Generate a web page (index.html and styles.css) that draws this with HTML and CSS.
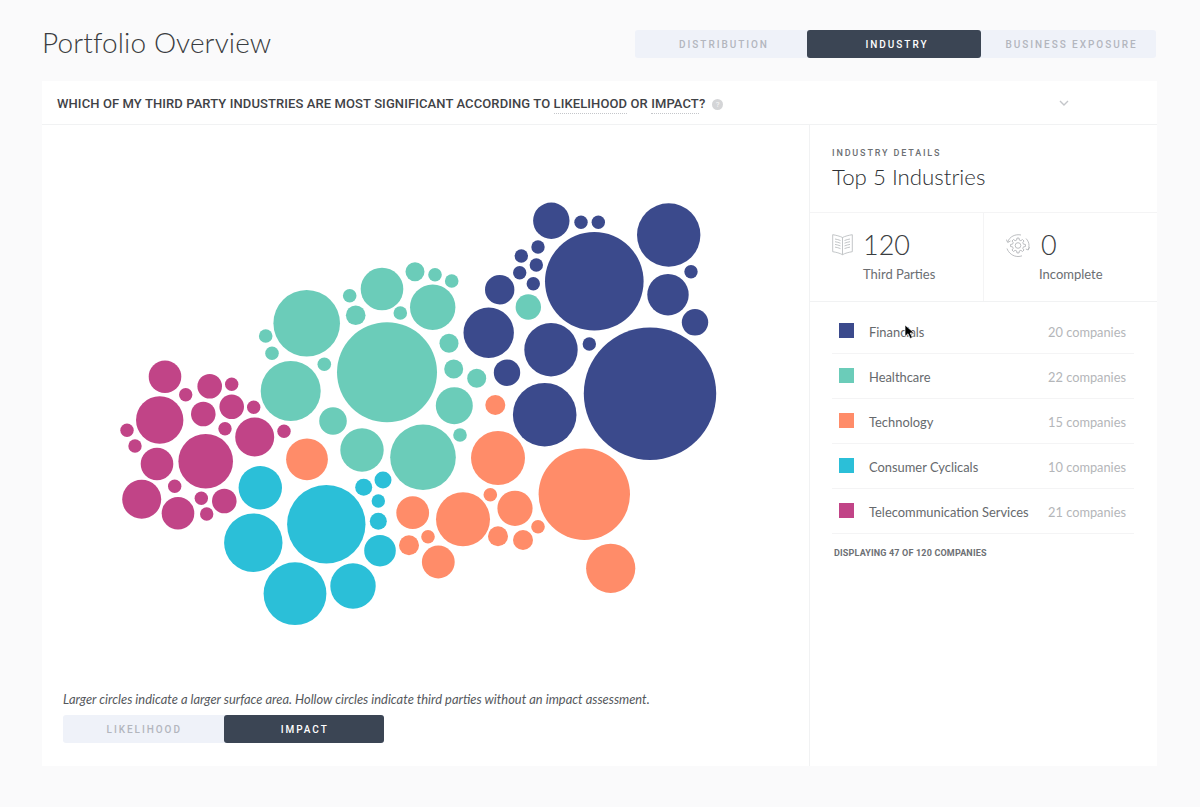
FILE: index.html
```html
<!DOCTYPE html>
<html lang="en">
<head>
<meta charset="utf-8">
<title>Portfolio Overview</title>
<link rel="stylesheet" href="styles.css">
</head>
<body>
<div class="page">
  <header class="top">
    <h1 class="title">Portfolio Overview</h1>
    <div class="tabs">
      <button class="seg seg-a">DISTRIBUTION</button>
      <button class="seg seg-b on">INDUSTRY</button>
      <button class="seg seg-c">BUSINESS EXPOSURE</button>
    </div>
  </header>
  <main class="card">
    <div class="question">
      <div class="q-text">WHICH OF MY THIRD PARTY INDUSTRIES ARE MOST SIGNIFICANT ACCORDING TO <span class="dot">LIKELIHOOD</span> OR <span class="dot">IMPACT</span>?<span class="help">?</span></div>
      <svg class="chev" width="10" height="6" viewBox="0 0 10 6"><path d="M1 1l4 4 4-4" fill="none" stroke="#c4c6ca" stroke-width="1.4"/></svg>
    </div>
    <div class="body">
      <section class="left">
        <svg class="chart" viewBox="42 125 767 557" width="767" height="557">
          <g fill="#3b4a8c">
            <circle cx="551.3" cy="220.7" r="18.2"/><circle cx="581" cy="222.3" r="6.7"/><circle cx="598.3" cy="222.3" r="6.7"/><circle cx="668.7" cy="235" r="31.7"/><circle cx="538" cy="247" r="6.7"/><circle cx="521.3" cy="256" r="6.7"/><circle cx="536.3" cy="265" r="6.7"/><circle cx="519.7" cy="272.7" r="6.7"/><circle cx="533.3" cy="283.7" r="6.7"/><circle cx="594.3" cy="281.3" r="49.3"/><circle cx="691" cy="271.7" r="6.7"/><circle cx="668" cy="294.7" r="20.7"/><circle cx="499.7" cy="289.7" r="14.7"/><circle cx="695" cy="322.3" r="13.2"/><circle cx="488.7" cy="332.7" r="25.2"/><circle cx="551" cy="349.7" r="26.7"/><circle cx="589.3" cy="344" r="6.7"/><circle cx="507" cy="372.7" r="13.2"/><circle cx="544.7" cy="414.7" r="31.8"/><circle cx="650" cy="393.7" r="66.2"/>
          </g>
          <g fill="#6bccb9">
            <circle cx="306.7" cy="323.3" r="33.3"/><circle cx="382" cy="289" r="21.3"/><circle cx="415" cy="271.7" r="9.5"/><circle cx="435" cy="274.7" r="6.8"/><circle cx="451.7" cy="281" r="6.8"/><circle cx="349.7" cy="295.7" r="6.8"/><circle cx="355.7" cy="315.3" r="9.8"/><circle cx="400.3" cy="313" r="6.8"/><circle cx="432.7" cy="307.3" r="22.7"/><circle cx="265.7" cy="336" r="6.8"/><circle cx="272" cy="353.3" r="6.8"/><circle cx="324.3" cy="364.3" r="6.8"/><circle cx="387" cy="372.3" r="50"/><circle cx="449" cy="343.3" r="9.5"/><circle cx="453.7" cy="369" r="9.5"/><circle cx="476.7" cy="378.3" r="9.5"/><circle cx="290.7" cy="391" r="30"/><circle cx="333" cy="421" r="13.8"/><circle cx="454.3" cy="405.7" r="18.5"/><circle cx="460" cy="435" r="6.8"/><circle cx="362" cy="450" r="21.7"/><circle cx="423" cy="457.3" r="32.8"/><circle cx="528.3" cy="307" r="12.7"/>
          </g>
          <g fill="#ff8c69">
            <circle cx="307" cy="459.3" r="20.9"/><circle cx="495.3" cy="405" r="10"/><circle cx="498" cy="458" r="27"/><circle cx="584.3" cy="494.3" r="45.7"/><circle cx="490.3" cy="494.7" r="6.8"/><circle cx="515" cy="508.3" r="17.6"/><circle cx="538" cy="526.7" r="6.8"/><circle cx="463" cy="519.3" r="27"/><circle cx="412.7" cy="512.7" r="16.4"/><circle cx="428" cy="536.7" r="6.8"/><circle cx="409" cy="545.3" r="10"/><circle cx="438.3" cy="562" r="16.4"/><circle cx="498" cy="536.3" r="10"/><circle cx="523" cy="540" r="10"/><circle cx="610.7" cy="568.3" r="24.6"/>
          </g>
          <g fill="#2bbfd8">
            <circle cx="260.3" cy="487.7" r="21.7"/><circle cx="326.3" cy="524.3" r="39.2"/><circle cx="253.3" cy="542.7" r="29.2"/><circle cx="295" cy="593.7" r="31.4"/><circle cx="353" cy="586" r="22.7"/><circle cx="380" cy="550.7" r="15.8"/><circle cx="378.3" cy="521.3" r="8.5"/><circle cx="378.3" cy="501" r="6.7"/><circle cx="363.7" cy="487.3" r="8.5"/><circle cx="383" cy="480" r="8.5"/>
          </g>
          <g fill="#c14487">
            <circle cx="165" cy="376.7" r="16.3"/><circle cx="185.7" cy="394.7" r="6.7"/><circle cx="209.7" cy="386.3" r="12.3"/><circle cx="231.7" cy="384.3" r="6.7"/><circle cx="159.7" cy="420" r="23.7"/><circle cx="203.3" cy="414" r="12.3"/><circle cx="231.7" cy="406.7" r="12.3"/><circle cx="253.7" cy="407.3" r="6.7"/><circle cx="127" cy="430.3" r="6.7"/><circle cx="135" cy="446" r="6.7"/><circle cx="225" cy="428.7" r="6.7"/><circle cx="254.7" cy="437" r="19.5"/><circle cx="284" cy="431.3" r="6.7"/><circle cx="157" cy="464" r="16.3"/><circle cx="205.7" cy="461.3" r="27.3"/><circle cx="141.7" cy="499.3" r="19.5"/><circle cx="174.7" cy="486.3" r="6.7"/><circle cx="178" cy="513.3" r="16.3"/><circle cx="201.3" cy="498.3" r="6.7"/><circle cx="224.3" cy="501" r="12.3"/><circle cx="206.7" cy="514" r="6.7"/>
          </g>
        </svg>
        <p class="note">Larger circles indicate a larger surface area. Hollow circles indicate third parties without an impact assessment.</p>
        <div class="toggle">
          <button class="seg seg-d">LIKELIHOOD</button>
          <button class="seg seg-d on">IMPACT</button>
        </div>
      </section>
      <aside class="right">
        <div class="r-head">
          <div class="eyebrow">INDUSTRY DETAILS</div>
          <h2 class="r-title">Top 5 Industries</h2>
        </div>
        <div class="stats">
          <div class="stat stat-one">
            <div class="stat-top">
              <svg class="ico" width="21" height="22" viewBox="0 0 21 22" fill="none" stroke="#b4b7ba" stroke-width=".8">
                <path d="M10.500 3.500C8 2.200 4 1.200.7.700v17c3.300.5 7.300 1.500 9.800 3 2.500-1.500 6.500-2.500 9.800-3V.7c-3.300.5-7.300 1.500-9.800 2.800zM10.500 3.500v17.200"/>
                <path d="M3 5c1.800.3 3.700.8 5.500 1.500M3 7.700c1.800.3 3.700.8 5.500 1.500M3 10.400c1.800.3 3.700.8 5.500 1.500M3 13.100c1.800.3 3.700.8 5.500 1.500M18 5c-1.800.3-3.700.8-5.500 1.500M18 7.700c-1.800.3-3.700.8-5.500 1.500M18 10.400c-1.800.3-3.700.8-5.500 1.500M18 13.100c-1.800.3-3.700.8-5.500 1.500"/>
              </svg>
              <span class="num">120</span>
            </div>
            <div class="stat-label">Third Parties</div>
          </div>
          <div class="stat stat-two">
            <div class="stat-top">
              <svg class="ico" width="24" height="23" viewBox="0 0 24 23" fill="none" stroke="#b4b7ba" stroke-width=".9">
                <path d="M15 1C9.500-.2 3.500 2.500 1.700 8M1 14.500C2.500 19 7 22.500 12 22.500c1.500 0 2.800-.2 4-.7"/>
                <path d="M20 4.500C22 6.500 23 9 23 11.500c0 1.500-.3 2.800-.8 4"/>
                <path d="M.3 5.500l1.400 3 2.800-1.500M19.800 15l2.400 1 1.500-2.800"/>
                <polygon transform="translate(12 11.500)" points="5.430,-1.350 7.430,-1.040 7.430,1.040 5.430,1.350 4.800,2.880 5.990,4.510 4.510,5.990 2.880,4.800 1.350,5.430 1.040,7.430 -1.040,7.430 -1.350,5.430 -2.880,4.800 -4.510,5.990 -5.990,4.510 -4.800,2.880 -5.430,1.350 -7.430,1.040 -7.430,-1.040 -5.430,-1.350 -4.800,-2.880 -5.990,-4.510 -4.510,-5.990 -2.880,-4.800 -1.350,-5.430 -1.040,-7.430 1.040,-7.430 1.350,-5.430 2.880,-4.800 4.510,-5.990 5.990,-4.510 4.800,-2.880"/>
                <circle cx="12" cy="11.500" r="2.800"/>
              </svg>
              <span class="num">0</span>
            </div>
            <div class="stat-label">Incomplete</div>
          </div>
        </div>
        <ul class="list">
          <li class="row">
            <span class="sw sw-navy"></span><span class="name">Financials</span><span class="count">20 companies</span>
            <svg class="cursor" width="12" height="16" viewBox="0 0 12 16"><path d="M1 1v11.500l3-2.700 2.200 4.700 2.200-1-2.200-4.500h4z" fill="#000" stroke="#fff" stroke-width=".7"/></svg>
          </li>
          <li class="row"><span class="sw sw-teal"></span><span class="name">Healthcare</span><span class="count">22 companies</span></li>
          <li class="row"><span class="sw sw-orange"></span><span class="name">Technology</span><span class="count">15 companies</span></li>
          <li class="row"><span class="sw sw-cyan"></span><span class="name">Consumer Cyclicals</span><span class="count">10 companies</span></li>
          <li class="row"><span class="sw sw-pink"></span><span class="name">Telecommunication Services</span><span class="count">21 companies</span></li>
        </ul>
        <div class="foot">DISPLAYING 47 OF 120 COMPANIES</div>
      </aside>
    </div>
  </main>
</div>
</body>
</html>
```
FILE: styles.css
```css
* { box-sizing: border-box; }
html, body { margin: 0; padding: 0; }
body {
  background: #fafafb;
  font-family: "Lato", "Liberation Sans", sans-serif;
  color: #3d3d3d;
}
.page { width: 1200px; height: 807px; padding: 30px 43px 0 42px; overflow: hidden; }
.top { display: flex; justify-content: space-between; align-items: flex-start; height: 28px; margin-bottom: 23px; padding-right: 1px; }
.title { margin: -2px 0 0; font-size: 28px; font-weight: 300; letter-spacing: .12px; line-height: 28px; color: #3a3d41; }
.tabs { display: flex; width: 521px; height: 28px; background: #eff2f9; border-radius: 3px; }
.toggle { display: flex; width: 321px; height: 28px; background: #eff2f9; border-radius: 3px; }
.seg {
  border: 0; margin: 0; padding: 0 0 0 6px; background: transparent; height: 28px;
  font-family: "Roboto", "Liberation Sans", sans-serif;
  font-size: 10px; font-weight: 500; letter-spacing: 1.950px; color: #b3b6be;
  border-radius: 3px;
}
.seg.on { background: #3b4554; color: #fff; }
.seg-a { width: 172px; }
.seg-b { width: 174px; }
.seg-c { width: 175px; }
.seg-d { width: 160.500px; padding-left: 2px; }
.card { width: 1115px; height: 685px; background: #fff; display: flex; flex-direction: column; }
.question { height: 44px; display: flex; align-items: center; padding-left: 15px; border-bottom: 1px solid #f1f2f3; position: relative; }
.q-text { font-family: "Roboto", "Liberation Sans", sans-serif; font-size: 13px; font-weight: 500; letter-spacing: .1px; line-height: 16px; color: #3f4246; width: 1002px; flex: none; white-space: pre; padding-top: 2px; }
.dot { border-bottom: 1px dotted #c4c6ca; padding-bottom: 2px; }
.help {
  display: inline-block; width: 11px; height: 11px; margin-left: 7px; border-radius: 50%;
  background: #d4d5d7; color: #f2f2f2; font-size: 8px; line-height: 11px; text-align: center; vertical-align: 1px;
}
.chev { flex: none; }
.body { flex: 1; display: flex; min-height: 0; }
.left { width: 768px; flex: none; border-right: 1px solid #f1f2f3; padding: 0; }
.chart { display: block; }
.note { margin: 9px 0 0 21px; font-size: 12.900px; font-style: italic; line-height: 16px; color: #55585c; }
.toggle { margin: 8px 0 0 21px; }
.right { flex: 1; min-width: 0; }
.r-head { height: 88px; padding: 23px 22px 0; border-bottom: 1px solid #f4f4f5; }
.eyebrow { font-family: "Roboto", "Liberation Sans", sans-serif; font-size: 9px; font-weight: 500; letter-spacing: 1.850px; line-height: 11px; color: #6d7074; }
.r-title { margin: 5px 0 0; font-size: 22.300px; font-weight: 300; line-height: 26px; color: #2e3135; }
.stats { display: flex; height: 89px; border-bottom: 1px solid #f1f2f3; }
.stat { width: 174px; padding-top: 16px; }
.stat-one { padding-left: 22px; border-right: 1px solid #f4f4f5; }
.stat-two { padding-left: 22px; flex: 1; }
.stat-top { display: flex; align-items: center; height: 32px; }
.stat-one .ico { margin-right: 10px; margin-top: -1px; }
.stat-two .ico { margin-right: 11px; margin-top: 0; }
.num { font-size: 27px; font-weight: 300; line-height: 32px; color: #3a3d41; }
.stat-label { font-size: 13px; line-height: 16px; color: #6b6e72; margin-top: 5px; }
.stat-one .stat-label { padding-left: 31px; }
.stat-two .stat-label { padding-left: 33px; }
.list { list-style: none; margin: 7px 22px 0; padding: 0; width: 302px; }
.row { position: relative; height: 45px; padding: 0 8px 0 7px; display: flex; align-items: center; border-bottom: 1px solid #f4f4f5; }
.sw { width: 15px; height: 15px; flex: none; margin-right: 15px; margin-top: -1px; }
.sw-navy { background: #3b4a8c; }
.sw-teal { background: #6bccb9; }
.sw-orange { background: #ff8c69; }
.sw-cyan { background: #2bbfd8; }
.sw-pink { background: #c14487; }
.name { font-size: 12.900px; color: #66696d; flex: 1; margin-top: 1px; white-space: nowrap; }
.count { font-size: 12.800px; color: #b4b6b9; white-space: nowrap; margin-top: 1px; }
.cursor { position: absolute; left: 72px; top: 15px; }
.foot { margin: 14px 0 0 24px; font-family: "Roboto", "Liberation Sans", sans-serif; font-size: 9px; font-weight: 700; letter-spacing: .17px; line-height: 11px; color: #6d7074; }
```
